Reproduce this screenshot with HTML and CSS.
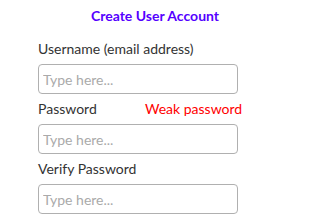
FILE: index.html
```html
<!DOCTYPE html>
<html lang="en">
<head>
    <meta charset="UTF-8">
    <meta name="viewport" content="width=device-width, initial-scale=1.0">
    <title>Create User Account</title>
    <link rel="stylesheet" href="styles.css">
</head>
<body>
    <div class="page">
        <h1 class="title">Create User Account</h1>
        <form class="form">
            <div class="field">
                <div class="label-row"><label class="label">Username (email address)</label></div>
                <input class="input" type="text" placeholder="Type here...">
            </div>
            <div class="field">
                <div class="label-row">
                    <label class="label short">Password</label>
                    <span class="error">Weak password</span>
                </div>
                <input class="input" type="password" placeholder="Type here...">
            </div>
            <div class="field">
                <div class="label-row"><label class="label">Verify Password</label></div>
                <input class="input" type="password" placeholder="Type here...">
            </div>
        </form>
    </div>
</body>
</html>
```

FILE: styles.css
```css
*{
    margin: 0;
    padding: 0;
    box-sizing: border-box;
}
body{
    font-family: Lato, "Liberation Sans", sans-serif;
    background-color: #fff;
    color: #333;
}
.page{
    padding-top: 6px;
}
.title{
    text-align: center;
    font-size: 14px;
    line-height: 20px;
    font-weight: bold;
    color: #5500ff;
}
.form{
    display: flex;
    flex-direction: column;
    padding-left: 38px;
    padding-top: 13px;
}
.field{
    display: flex;
    flex-direction: column;
    gap: 5px;
    margin-bottom: 5px;
}
.label-row{
    display: flex;
    font-size: 14px;
    line-height: 20px;
}
.label.short{
    width: 107px;
}
.error{
    color: #ff0000;
}
.input{
    width: 200px;
    height: 30px;
    border: 1px solid #b0b0b0;
    border-radius: 4px;
    padding: 0 4px;
    font-family: Lato, "Liberation Sans", sans-serif;
    font-size: 14px;
    color: #333;
    outline: none;
}
.input::placeholder{
    color: #aaa;
}
```
